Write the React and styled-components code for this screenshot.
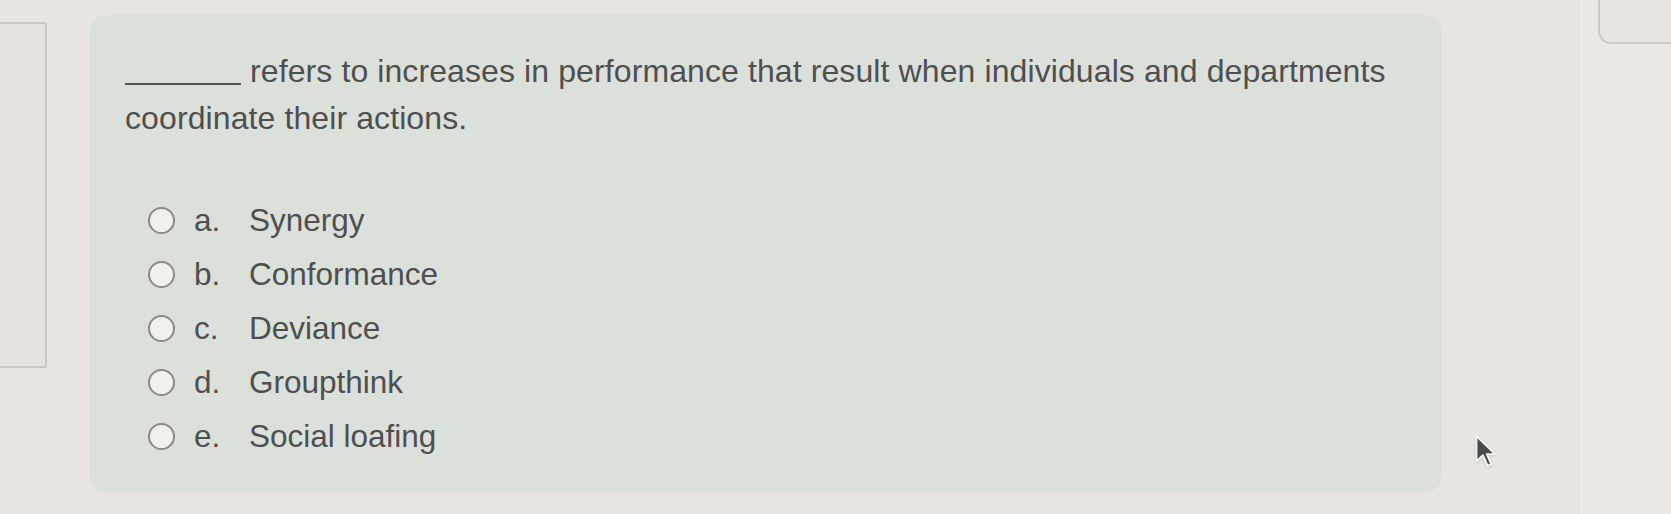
import React from "react";
import styled, { createGlobalStyle } from "styled-components";

const Global = createGlobalStyle`
  html, body { margin: 0; padding: 0; background: #e8e5e0; }
  body { font-family: "Liberation Sans", Arial, sans-serif; }
`;

const Page = styled.div`
  position: relative;
  display: flex;
  width: 1671px;
  height: 514px;
  overflow: hidden;
  background: #e8e5e0;
`;

const LeftStub = styled.div`
  flex: 0 0 47px;
  height: 346px;
  margin-top: 22px;
  box-sizing: border-box;
  border: 2px solid #cbc6c1;
  border-left: none;
  border-radius: 0 3px 3px 0;
  background: #e6e3de;
`;

const Card = styled.section`
  flex: 0 0 1352px;
  height: 477px;
  margin: 15px 0 0 43px;
  box-sizing: border-box;
  padding: 33px 30px 0 35px;
  border-radius: 16px;
  background: #dce0db;
  color: #4f4f4f;
`;

const Question = styled.p`
  margin: 0;
  font-size: 32px;
  line-height: 47px;
  letter-spacing: 0.1px;
`;

const Blank = styled.span`
  display: inline-block;
  width: 116px;
  height: 2px;
  margin-right: 9px;
  background: #555;
  vertical-align: -3px;
`;

const Options = styled.ul`
  list-style: none;
  margin: 51px 0 0;
  padding: 0 0 0 23px;
  display: flex;
  flex-direction: column;
`;

const Option = styled.li`
  display: flex;
  align-items: center;
  height: 54px;
  font-size: 31.5px;
`;

const Radio = styled.span`
  flex: 0 0 auto;
  width: 27px;
  height: 27px;
  box-sizing: border-box;
  border-radius: 50%;
  border: 2.5px solid #8a8a88;
  background: #f0f0ed;
`;

const Letter = styled.span`
  flex: 0 0 55px;
  margin-left: 19px;
`;

const Label = styled.span``;

const Spacer = styled.div`
  flex: 1 1 auto;
`;

const RightPanel = styled.div`
  flex: 0 0 91px;
  height: 100%;
  background: #ebe8e3;
`;

const TopBox = styled.div`
  margin-left: 18px;
  height: 44px;
  box-sizing: border-box;
  border-left: 2px solid #cdc8c3;
  border-bottom: 2px solid #cdc8c3;
  border-bottom-left-radius: 13px;
  background: #e9e6e1;
`;

const Cursor = styled.svg`
  position: absolute;
  left: 1474px;
  top: 434px;
  width: 24px;
  height: 36px;
  filter: drop-shadow(0 1px 1px rgba(0,0,0,0.15));
`;

const items = [
  ["a.", "Synergy"],
  ["b.", "Conformance"],
  ["c.", "Deviance"],
  ["d.", "Groupthink"],
  ["e.", "Social loafing"],
];

export default function App() {
  return (
    <Page>
      <Global />
      <LeftStub />
      <Card>
        <Question>
          <Blank />refers to increases in performance that result when individuals and departments coordinate their actions.
        </Question>
        <Options>
          {items.map(([l, t]) => (
            <Option key={l}>
              <Radio />
              <Letter>{l}</Letter>
              <Label>{t}</Label>
            </Option>
          ))}
        </Options>
      </Card>
      <Spacer />
      <RightPanel>
        <TopBox />
      </RightPanel>
      <Cursor viewBox="0 0 22 34">
        <path d="M2 2 L2 26 L8 20 L12.5 30 L16 28.5 L11.8 19 L19.5 19 Z" fill="#4b4b4b" stroke="#f4f4f2" strokeWidth="1.8" strokeLinejoin="round" />
      </Cursor>
    </Page>
  );
}
